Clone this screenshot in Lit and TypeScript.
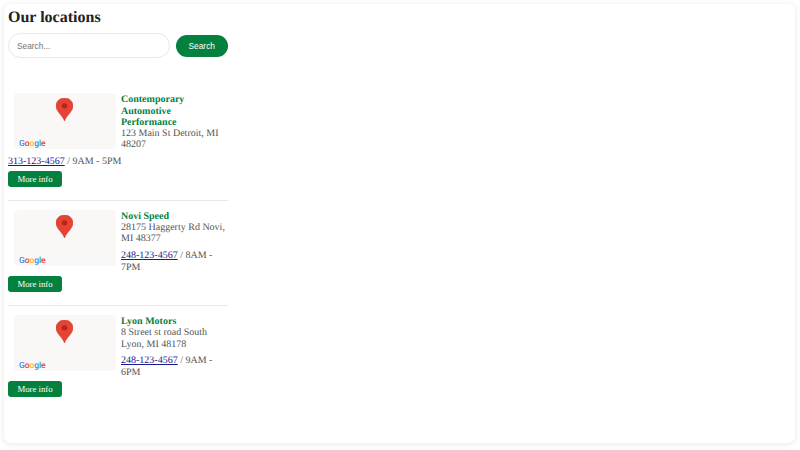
import { html, css, LitElement } from 'lit';
import { customElement } from 'lit/decorators.js';

const locations = [
  { name: 'Contemporary Automotive Performance', address: '123 Main St Detroit, MI 48207', phone: '313-123-4567', hours: '9AM - 5PM', wide: true },
  { name: 'Novi Speed', address: '28175 Haggerty Rd Novi, MI 48377', phone: '248-123-4567', hours: '8AM - 7PM', wide: false },
  { name: 'Lyon Motors', address: '8 Street st road South Lyon, MI 48178', phone: '248-123-4567', hours: '9AM - 6PM', wide: false },
];

@customElement('app-root')
export class AppRoot extends LitElement {
  static styles = css`
    :host {
      display: block;
      height: 450px;
      box-sizing: border-box;
      padding: 4px 5px 7px 4px;
      background: #fff;
      font-family: 'Liberation Serif', serif;
      color: #555;
      text-rendering: geometricPrecision;
    }
    .card {
      height: 100%;
      box-sizing: border-box;
      padding: 4px;
      border-radius: 7px;
      background: #fff;
      box-shadow: 0 1px 6px rgba(0, 0, 0, 0.1);
    }
    .side { width: 220px; }
    h1 {
      margin: 0;
      font-size: 16px;
      line-height: 19px;
      color: #222;
    }
    .search {
      display: flex;
      align-items: center;
      gap: 6px;
      margin-top: 6px;
    }
    .search input {
      width: 152px;
      height: 23.3px;
      box-sizing: content-box;
      padding: 0 0 0 8px;
      border: 1px solid #e8e8e8;
      border-radius: 13px;
      font: 8.33px 'Liberation Sans', sans-serif;
      outline: none;
    }
    .search input::placeholder { color: #757575; }
    .search button {
      width: 51.5px;
      height: 22px;
      padding: 0;
      border: 0;
      border-radius: 11px;
      background: #04813f;
      color: #fff;
      font: 8.33px 'Liberation Sans', sans-serif;
    }
    .list { margin-top: 35px; }
    .item {
      padding-bottom: 13px;
      margin-bottom: 9.35px;
      border-bottom: 1px solid #e8e8e8;
    }
    .item:last-child { border-bottom: 0; }
    .top { display: flex; gap: 5px; }
    .map {
      position: relative;
      flex: none;
      width: 102px;
      height: 56px;
      margin-left: 6px;
      border-radius: 4px;
      background: #faf8f6;
    }
    .map svg {
      position: absolute;
      left: 42px;
      top: 5px;
    }
    .google {
      position: absolute;
      left: 5px;
      bottom: 0;
      font: 500 8.5px 'Roboto', sans-serif;
      letter-spacing: -0.1px;
    }
    .g1 { color: #4285f4; }
    .g2 { color: #ea4335; }
    .g3 { color: #fbbc05; }
    .g4 { color: #34a853; }
    .info {
      min-width: 0;
      padding-top: 1px;
      font-size: 10px;
      line-height: 11.25px;
    }
    .name {
      font-weight: 700;
      color: #04813f;
    }
    .meta {
      font-size: 10px;
      line-height: 12px;
    }
    .info .meta { margin-top: 5.5px; }
    .wide { margin-top: 5.5px; margin-bottom: 3px; }
    a { color: #1a1a90; }
    .more {
      display: block;
      width: 54px;
      height: 15.5px;
      margin-top: 2.1px;
      padding: 0;
      border: 0;
      border-radius: 3px;
      background: #04813f;
      color: #fff;
      font: 8.75px 'Liberation Serif', serif;
    }
  `;

  renderMap() {
    return html`<div class="map">
      <svg width="17" height="23" viewBox="0 0 17 24" preserveAspectRatio="none">
        <path d="M8.5 0C3.8 0 0 3.6 0 8.2c0 2.6 1 4.3 2.6 6.6 2.5 3.3 4.9 6 5.9 9.2 1-3.2 3.4-5.9 5.9-9.2C16 12.5 17 10.8 17 8.2 17 3.6 13.2 0 8.5 0z" fill="#e74335" stroke="#c5362b" stroke-width="0.5"/>
        <circle cx="8.5" cy="8.2" r="2.8" fill="#b3261e"/>
      </svg>
      <span class="google"><span class="g1">G</span><span class="g2">o</span><span class="g3">o</span><span class="g1">g</span><span class="g4">l</span><span class="g2">e</span></span>
    </div>`;
  }

  renderMeta(l: (typeof locations)[number], cls: string) {
    return html`<div class="meta ${cls}"><a href="#">${l.phone}</a> / ${l.hours}</div>`;
  }

  render() {
    return html`
      <div class="card">
        <div class="side">
          <h1>Our locations</h1>
          <div class="search">
            <input placeholder="Search..." />
            <button>Search</button>
          </div>
          <div class="list">
            ${locations.map(
              (l) => html`
                <div class="item">
                  <div class="top">
                    ${this.renderMap()}
                    <div class="info">
                      <div class="name">${l.name}</div>
                      <div>${l.address}</div>
                      ${l.wide ? '' : this.renderMeta(l, '')}
                    </div>
                  </div>
                  ${l.wide ? this.renderMeta(l, 'wide') : ''}
                  <button class="more">More info</button>
                </div>
              `,
            )}
          </div>
        </div>
      </div>
    `;
  }
}
